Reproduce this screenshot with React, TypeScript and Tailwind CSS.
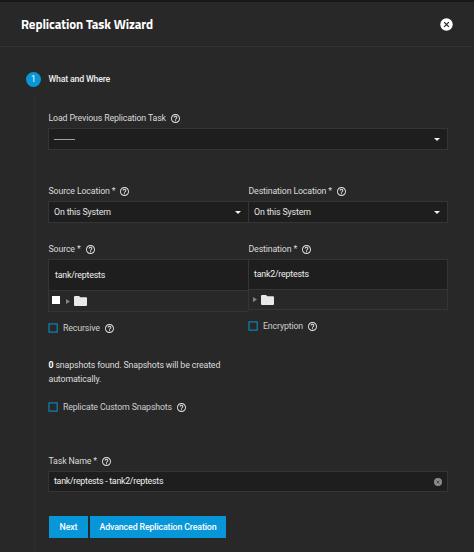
import type { ReactNode } from "react";

function Help() {
  return (
    <svg className="h-[9px] w-[9px] shrink-0" viewBox="2 2 20 20" fill="#e2e2e2" stroke="#e2e2e2" strokeWidth="0.2">
      <path d="M11 18h2v-2h-2v2zm1-16C6.48 2 2 6.48 2 12s4.48 10 10 10 10-4.48 10-10S17.52 2 12 2zm0 18c-4.41 0-8-3.59-8-8s3.59-8 8-8 8 3.59 8 8-3.59 8-8 8zm0-14c-2.21 0-4 1.79-4 4h2c0-1.1.9-2 2-2s2 .9 2 2c0 2-3 1.75-3 5h2c0-2.25 3-2.5 3-5 0-2.21-1.79-4-4-4z" />
    </svg>
  );
}

function Label({ children }: { children: ReactNode }) {
  return (
    <div className="flex h-[20px] items-center gap-[5px] pl-[0.5px] text-[8.8px] tracking-[-0.15px] text-[#dadada]">
      <span>{children}</span>
      <Help />
    </div>
  );
}

function Select({ children, joined }: { children: ReactNode; joined?: boolean }) {
  return (
    <div className={`flex h-[22px] items-center justify-between border border-[#353535] bg-[#1e1e1e] pr-[7px] pl-[5px] text-[8.8px] tracking-[-0.15px] text-[#e4e4e4] ${joined ? "border-r-0" : ""}`}>
      <span>{children}</span>
      <svg className="h-[3px] w-[6px]" viewBox="0 0 6 3" fill="#f0f0f0">
        <path d="M0 0h6L3 3z" />
      </svg>
    </div>
  );
}

function Check({ children }: { children: ReactNode }) {
  return (
    <div className="flex h-[12px] items-center text-[8.8px] tracking-[-0.15px] text-[#cdcdcd]">
      <svg className="mr-[5px] h-[10px] w-[10px]" viewBox="0 0 10 10">
        <rect x="1" y="0.9" width="8.2" height="8.2" fill="none" stroke="#0e83b5" strokeWidth="1.2" />
      </svg>
      <span className="mr-[5px]">{children}</span>
      <Help />
    </div>
  );
}

function Folder() {
  return (
    <div className="flex items-center gap-[4px]">
      <svg className="h-[5px] w-[4px]" viewBox="0 0 4 5" fill="#858585">
        <path d="M0 0l4 2.5L0 5z" />
      </svg>
      <svg className="h-[10px] w-[13px]" viewBox="0 0 13 10" fill="#e9e9e9">
        <path d="M1 0h4l1.3 1.3H12a1 1 0 0 1 1 1V9a1 1 0 0 1-1 1H1a1 1 0 0 1-1-1V1a1 1 0 0 1 1-1z" />
      </svg>
    </div>
  );
}

export default function App() {
  return (
    <div className="h-[552px] w-[474px] overflow-hidden border-t-2 border-[#171717] bg-[#282828] font-['Roboto',sans-serif] leading-none whitespace-nowrap">
      <header className="mr-[2px] flex h-[45px] items-center justify-between border-b border-[#333333] pr-[19px] pl-[21px]">
        <h1 className="font-['Titillium_Web','Open_Sans',sans-serif] text-[13px] font-bold tracking-[-0.09px] text-white">Replication Task Wizard</h1>
        <svg className="h-[13px] w-[13px]" viewBox="0 0 13 13">
          <circle cx="6.5" cy="6.5" r="6.2" fill="#fff" />
          <path d="M4.1 4.1l4.8 4.8M8.9 4.1l-4.8 4.8" stroke="#282828" strokeWidth="1.2" />
        </svg>
      </header>
      <div className="mt-[25px] ml-[26px] flex h-[15px] items-center">
        <span className="mr-[7.5px] flex h-[15px] w-[15px] items-center justify-center rounded-full bg-[#0797d6] text-[8.5px] text-white">1</span>
        <span className="text-[8.8px] font-medium tracking-[-0.2px] text-[#ededed]">What and Where</span>
      </div>
      <main className="mt-[5px] ml-[34px] h-[460px] border-l border-[#2d2d2d] pt-[16px] pl-[13px]">
        <div className="w-[400px]">
          <Label>Load Previous Replication Task</Label>
          <Select>
            <span className="block h-[1px] w-[21px] bg-[#a0a0a0]" />
          </Select>
          <div className="mt-[31px] grid grid-cols-2">
            <div>
              <Label>Source Location *</Label>
              <Select joined>On this System</Select>
            </div>
            <div>
              <Label>Destination Location *</Label>
              <Select>On this System</Select>
            </div>
          </div>
          <div className="mt-[16px] grid h-[94px] grid-cols-2">
            <div>
              <Label>Source *</Label>
              <div className="h-[53px] border border-r-0 border-[#353535]">
                <div className="flex h-[31px] items-center border-b border-[#353535] bg-[#1e1e1e] pl-[6px] text-[8.8px] tracking-[-0.2px] text-[#f0f0f0]">tank/reptests</div>
                <div className="flex h-[20px] items-center pl-[3px]">
                  <span className="mr-[6px] mb-[3px] h-[8px] w-[8px] bg-white" />
                  <Folder />
                </div>
              </div>
              <div className="mt-[10px]">
                <Check>Recursive</Check>
              </div>
            </div>
            <div>
              <Label>Destination *</Label>
              <div className="h-[51px] border border-[#353535]">
                <div className="flex h-[30px] items-center border-b border-[#353535] bg-[#1e1e1e] pl-[5px] text-[8.8px] tracking-[-0.2px] text-[#f0f0f0]">tank2/reptests</div>
                <div className="flex h-[19px] items-center pl-[4px]">
                  <Folder />
                </div>
              </div>
              <div className="mt-[10px]">
                <Check>Encryption</Check>
              </div>
            </div>
          </div>
          <p className="mt-[25px] w-[190px] pl-[0.5px] text-[8.8px] leading-[14px] tracking-[-0.14px] text-[#dcdcdc]">
            <b className="text-white">0</b> snapshots found. Snapshots will be created
            <br />
            automatically.
          </p>
          <div className="mt-[15px]">
            <Check>Replicate Custom Snapshots</Check>
          </div>
          <div className="mt-[38px]">
            <Label>Task Name *</Label>
            <div className="flex h-[21px] items-center justify-between border border-[#353535] bg-[#1e1e1e] pr-[5px] pl-[5px] text-[8.8px] tracking-[-0.26px] text-[#f0f0f0]">
              <span>tank/reptests - tank2/reptests</span>
              <svg className="h-[8px] w-[8px]" viewBox="0 0 8 8">
                <circle cx="4" cy="4" r="4" fill="#8b8b8b" />
                <path d="M2.6 2.6l2.8 2.8M5.4 2.6L2.6 5.4" stroke="#444" strokeWidth=".9" />
              </svg>
            </div>
          </div>
          <div className="mt-[24px] flex gap-[2px] pl-[1px] text-[8.8px] font-medium tracking-[-0.13px] text-white">
            <button className="h-[22px] w-[39px] bg-[#0797d9]">Next</button>
            <button className="h-[22px] w-[136px] bg-[#0797d9]">Advanced Replication Creation</button>
          </div>
        </div>
      </main>
    </div>
  );
}
